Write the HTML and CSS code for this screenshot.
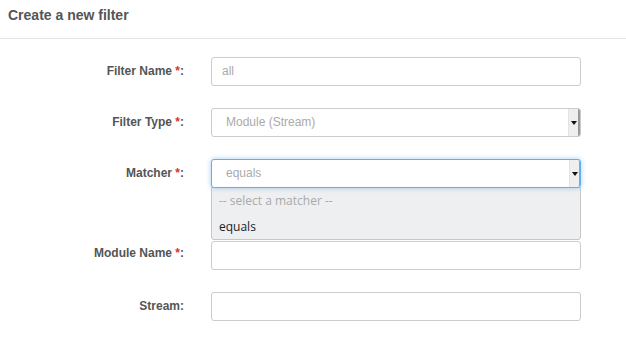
FILE: index.html
```html
<!DOCTYPE html>
<html lang="en">
<head>
    <meta charset="UTF-8">
    <meta name="viewport" content="width=device-width, initial-scale=1.0">
    <title>Create a new filter</title>
    <link rel="stylesheet" href="styles.css">
</head>
<body>
    <div class="header">Create a new filter</div>

    <form class="form">
        <div class="row">
            <label class="label">Filter Name <span class="req">*</span>:</label>
            <div class="field">
                <div class="input placeholder">all</div>
            </div>
        </div>

        <div class="row">
            <label class="label">Filter Type <span class="req">*</span>:</label>
            <div class="field">
                <div class="input select placeholder">
                    Module (Stream)
                    <span class="arrow"></span>
                </div>
            </div>
        </div>

        <div class="row open">
            <label class="label">Matcher <span class="req">*</span>:</label>
            <div class="field">
                <div class="input select focus placeholder">
                    equals
                    <span class="arrow"></span>
                </div>
                <ul class="menu">
                    <li class="muted">-- select a matcher --</li>
                    <li>equals</li>
                </ul>
            </div>
        </div>

        <div class="row">
            <label class="label">Module Name <span class="req">*</span>:</label>
            <div class="field">
                <div class="input"></div>
            </div>
        </div>

        <div class="row">
            <label class="label">Stream:</label>
            <div class="field">
                <div class="input"></div>
            </div>
        </div>
    </form>
</body>
</html>
```

FILE: styles.css
```css
body {
    margin: 0;
    background: #fff;
    font-family: "Liberation Sans", Arial, sans-serif;
    color: #555;
}

.header {
    font-size: 14px;
    font-weight: bold;
    color: #555;
    padding: 7px 8px 0;
    height: 31px;
    border-bottom: 1px solid #e5e5e5;
}

.form {
    padding-top: 18px;
}

.row {
    display: flex;
    margin-bottom: 22px;
}
.row.open {
    margin-bottom: 1px;
}

.label {
    width: 211px;
    text-align: right;
    font-size: 12px;
    font-weight: bold;
    line-height: 29px;
    padding-right: 27px;
    box-sizing: border-box;
}
.row.open + .row .label {
    line-height: 25px;
}
.req {
    color: #d9332b;
}

.field {
    width: 370px;
}

/* Inputs */
.input {
    position: relative;
    height: 29px;
    box-sizing: border-box;
    border: 1px solid #ccc;
    border-radius: 3px;
    padding: 0 10px;
    font-size: 12px;
    line-height: 27px;
    color: #555;
    background: #fff;
}
.placeholder {
    color: #aaa;
}

.select {
    padding-left: 14px;
}
.select .arrow {
    position: absolute;
    top: 0;
    right: 0;
    width: 9px;
    height: 100%;
    background: #efefef;
    border-left: 1px solid #e3e3e3;
    border-right: 2px solid #999;
    border-radius: 0 2px 2px 0;
}
.select .arrow::after {
    content: "";
    position: absolute;
    top: 12px;
    left: 2px;
    border-left: 3px solid transparent;
    border-right: 3px solid transparent;
    border-top: 4px solid #111;
}

.focus {
    border-color: #66afe9;
    box-shadow: 0 0 5px rgba(102, 175, 233, 0.6);
}
.focus .arrow {
    border-right: 1px solid #66afe9;
}

/* Dropdown */
.menu {
    list-style: none;
    margin: -1px 0 0;
    padding: 0;
    height: 53px;
    box-sizing: border-box;
    background: #eeeff1;
    border: 1px solid #c6c6c6;
    border-radius: 0 0 3px 3px;
    font-family: "Open Sans", sans-serif;
    font-size: 12px;
    color: #222;
}
.menu li {
    height: 26px;
    line-height: 26px;
    padding-left: 7px;
}
.menu .muted {
    color: #aaa;
}
```
